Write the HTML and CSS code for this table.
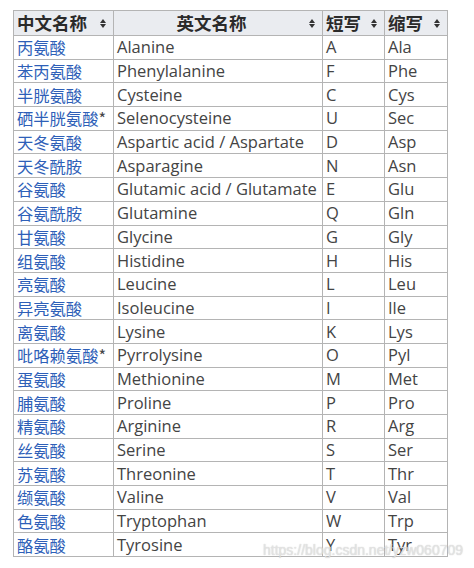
FILE: index.html
```html
<!DOCTYPE html>
<html lang="zh">
<head>
<meta charset="utf-8">
<link rel="stylesheet" href="styles.css">
</head>
<body>
<div class="wrap">
<table class="aa">
<colgroup><col class="c1"><col class="c2"><col class="c3"><col class="c4"></colgroup>
<thead>
<tr>
<th><span class="hl">中文名称</span><span class="sort"></span></th>
<th class="center"><span>英文名称</span><span class="sort"></span></th>
<th><span class="hl">短写</span><span class="sort"></span></th>
<th><span class="hl">缩写</span><span class="sort"></span></th>
</tr>
</thead>
<tbody>
<tr><td class="zh">丙氨酸</td><td>Alanine</td><td>A</td><td>Ala</td></tr>
<tr><td class="zh">苯丙氨酸</td><td>Phenylalanine</td><td>F</td><td>Phe</td></tr>
<tr><td class="zh">半胱氨酸</td><td>Cysteine</td><td>C</td><td>Cys</td></tr>
<tr><td class="zh">硒半胱氨酸<span class="ast">*</span></td><td>Selenocysteine</td><td>U</td><td>Sec</td></tr>
<tr><td class="zh">天冬氨酸</td><td>Aspartic acid / Aspartate</td><td>D</td><td>Asp</td></tr>
<tr><td class="zh">天冬酰胺</td><td>Asparagine</td><td>N</td><td>Asn</td></tr>
<tr><td class="zh">谷氨酸</td><td>Glutamic acid / Glutamate</td><td>E</td><td>Glu</td></tr>
<tr><td class="zh">谷氨酰胺</td><td>Glutamine</td><td>Q</td><td>Gln</td></tr>
<tr><td class="zh">甘氨酸</td><td>Glycine</td><td>G</td><td>Gly</td></tr>
<tr><td class="zh">组氨酸</td><td>Histidine</td><td>H</td><td>His</td></tr>
<tr><td class="zh">亮氨酸</td><td>Leucine</td><td>L</td><td>Leu</td></tr>
<tr><td class="zh">异亮氨酸</td><td>Isoleucine</td><td>I</td><td>Ile</td></tr>
<tr><td class="zh">离氨酸</td><td>Lysine</td><td>K</td><td>Lys</td></tr>
<tr><td class="zh">吡咯赖氨酸<span class="ast">*</span></td><td>Pyrrolysine</td><td>O</td><td>Pyl</td></tr>
<tr><td class="zh">蛋氨酸</td><td>Methionine</td><td>M</td><td>Met</td></tr>
<tr><td class="zh">脯氨酸</td><td>Proline</td><td>P</td><td>Pro</td></tr>
<tr><td class="zh">精氨酸</td><td>Arginine</td><td>R</td><td>Arg</td></tr>
<tr><td class="zh">丝氨酸</td><td>Serine</td><td>S</td><td>Ser</td></tr>
<tr><td class="zh">苏氨酸</td><td>Threonine</td><td>T</td><td>Thr</td></tr>
<tr><td class="zh">缬氨酸</td><td>Valine</td><td>V</td><td>Val</td></tr>
<tr><td class="zh">色氨酸</td><td>Tryptophan</td><td>W</td><td>Trp</td></tr>
<tr><td class="zh">酪氨酸</td><td>Tyrosine</td><td>Y</td><td>Tyr</td></tr>
</tbody>
</table>
<div class="watermark">https://blog.csdn.net/yzw060709</div>
</div>
</body>
</html>
```

FILE: styles.css
```css
html, body {
  margin: 0;
  padding: 0;
  background: #ffffff;
}
.wrap {
  position: relative;
  padding: 10px 0 0 13px;
  width: 474px;
  height: 568px;
  box-sizing: border-box;
}
.aa {
  border-collapse: collapse;
  table-layout: fixed;
  width: 434px;
  font-family: "Open Sans", "Noto Sans CJK SC", sans-serif;
  font-size: 16.5px;
  color: #444444;
}
.c1 { width: 100px; }
.c2 { width: 209px; }
.c3 { width: 62px; }
.c4 { width: 63px; }
.aa th, .aa td {
  border: 1px solid #b4b4b4;
  padding: 0 3px;
  white-space: nowrap;
  overflow: hidden;
}
.aa th {
  background: #eaecf0;
  height: 24px;
  font-family: "Noto Sans CJK SC", sans-serif;
  font-weight: bold;
  font-size: 17.5px;
  color: #2a2a2a;
  text-align: left;
  line-height: 24px;
  position: relative;
  padding-right: 16px;
}
.aa th.center { text-align: center; }
.sort {
  position: absolute;
  right: 7px;
  top: 50%;
  width: 6px;
  height: 9px;
  margin-top: -4px;
}
.sort::before, .sort::after {
  content: "";
  position: absolute;
  left: 0;
  border-left: 3px solid transparent;
  border-right: 3px solid transparent;
}
.sort::before {
  top: 0;
  border-bottom: 4px solid #333;
}
.sort::after {
  bottom: 0;
  border-top: 4px solid #333;
}
.aa td {
  height: 22.7px;
  line-height: 22px;
}
.aa td.zh {
  font-family: "Noto Sans CJK SC", sans-serif;
  color: #2e5fb8;
  font-size: 16.3px;
}
.ast {
  color: #444444;
}
.watermark {
  position: absolute;
  left: 263px;
  top: 542px;
  font-family: "Liberation Sans", Arial, sans-serif;
  font-size: 14px;
  color: rgba(235, 235, 235, 0.75);
  text-shadow: 0 0 1px rgba(150, 150, 150, 0.6);
}
```
